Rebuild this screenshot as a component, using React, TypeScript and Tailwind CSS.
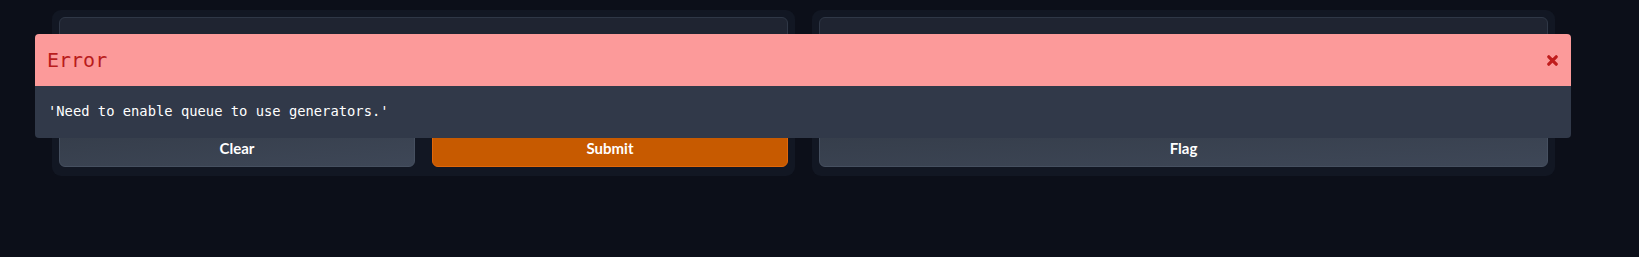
import React from "react";

export default function App() {
  return (
    <div className="relative w-[1639px] h-[257px] bg-[#0c0f19] overflow-hidden" style={{ fontFamily: "Lato, 'Noto Sans', sans-serif" }}>
      <div className="flex gap-[17px] pl-[52px] pr-[84px] pt-[10px]">
        {/* left panel */}
        <div className="flex-1 rounded-[9px] bg-[#121723] p-[7px] pb-[9px] flex flex-col gap-[16px]">
          <div className="h-[96px] rounded-[6px] border border-[#2f3746] bg-[#1f2431]" />
          <div className="flex gap-[17px]">
            <button className="flex-1 h-[38px] rounded-[6px] border border-[#465060] bg-gradient-to-br from-[#353d4a] to-[#3e4757] text-white text-[15px] font-bold">
              Clear
            </button>
            <button className="flex-1 h-[38px] rounded-[6px] border border-[#e0670a] bg-[#c75a00] text-white text-[15px] font-bold">
              Submit
            </button>
          </div>
        </div>
        {/* right panel */}
        <div className="flex-1 rounded-[9px] bg-[#121723] p-[7px] pb-[9px] flex flex-col gap-[16px]">
          <div className="h-[96px] rounded-[6px] border border-[#2f3746] bg-[#1f2431]" />
          <button className="w-full h-[38px] rounded-[6px] border border-[#465060] bg-gradient-to-br from-[#353d4a] to-[#3e4757] text-white text-[15px] font-bold">
            Flag
          </button>
        </div>
      </div>

      {/* error toast */}
      <div className="absolute left-[35px] top-[34px] w-[1536px] rounded-[4px] overflow-hidden" style={{ fontFamily: "'DejaVu Sans Mono', monospace" }}>
        <div className="h-[52px] bg-[#fc9a9a] flex items-center justify-between pl-[12px] pr-[13px]">
          <span className="text-[20px] text-[#b91c1c] leading-none">Error</span>
          <svg width="11" height="11" viewBox="0 0 11 11" className="mt-[1px]">
            <path d="M1.8 1.8 L9.2 9.2 M9.2 1.8 L1.8 9.2" stroke="#c01c1c" strokeWidth="3.2" strokeLinecap="round" />
          </svg>
        </div>
        <div className="h-[52px] bg-[#313949] flex items-center pl-[13px]">
          <span className="text-[13.8px] text-white leading-none">'Need to enable queue to use generators.'</span>
        </div>
      </div>
    </div>
  );
}
